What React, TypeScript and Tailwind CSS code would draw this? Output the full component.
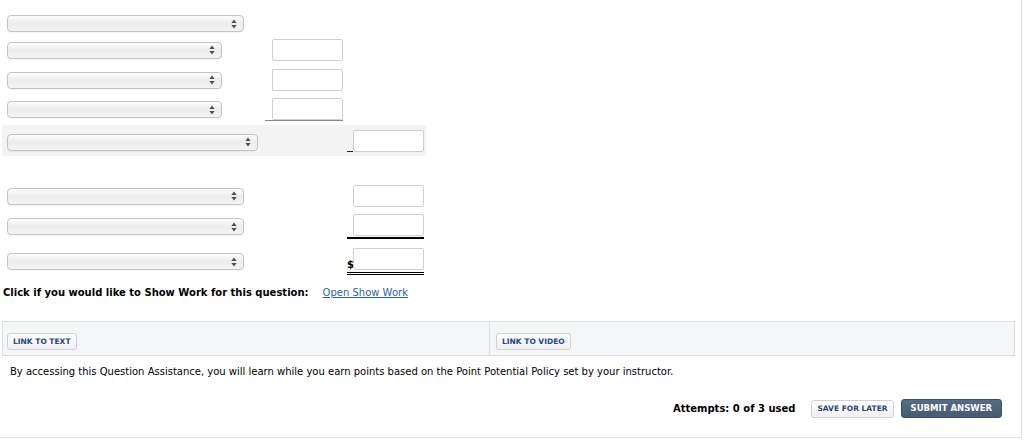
import React from "react";

function Select({ w }: { w: string }) {
  return (
    <div
      className={`${w} h-[17px] shrink-0 flex items-center justify-end pr-[6px] rounded-[4px] border border-[#c3c3c3] bg-gradient-to-b from-[#fdfdfd] via-[#ececec] to-[#f4f4f4] shadow-[0_1px_0_rgba(0,0,0,0.04)]`}
    >
      <svg width="6" height="10" viewBox="0 0 6 10" className="text-[#505050]">
        <path d="M3 0.5 L5.6 4 L0.4 4 Z" fill="currentColor" />
        <path d="M3 9.5 L5.6 6 L0.4 6 Z" fill="currentColor" />
      </svg>
    </div>
  );
}

function Field() {
  return <div className="w-[71px] h-[22px] shrink-0 rounded-[2px] border border-[#cfcfcf] bg-white" />;
}

function SmallButton({ children }: { children: React.ReactNode }) {
  return (
    <div className="h-[17px] px-[5px] flex items-center rounded-[3px] border border-[#cdd2da] bg-gradient-to-b from-white to-[#edf0f4] text-[7.5px] font-bold text-[#2c4677]">
      {children}
    </div>
  );
}

export default function App() {
  return (
    <div
      className="w-[1022px] h-[438px] border-r border-b border-[#dfe2e8] bg-white text-black"
      style={{ fontFamily: '"DejaVu Sans", Verdana, sans-serif' }}
    >
      {/* answer rows */}
      <div className="pt-[15px] pl-[7px]">
        <Select w="w-[237px]" />
      </div>

      <div className="mt-[7px] pl-[7px] flex items-center gap-[50px]">
        <Select w="w-[215px]" />
        <Field />
      </div>

      <div className="mt-[8px] pl-[7px] flex items-center gap-[50px]">
        <Select w="w-[215px]" />
        <Field />
      </div>

      <div className="mt-[7px] pl-[7px] flex items-center gap-[43px]">
        <Select w="w-[215px]" />
        <div className="pl-[7px] border-b border-[#8a8a8a]">
          <Field />
        </div>
      </div>

      <div className="mt-[4px] ml-[2px] w-[424px] h-[31px] bg-[#f3f3f3] flex items-center pl-[5px] gap-[89px]">
        <div className="pt-[3px]">
          <Select w="w-[251px]" />
        </div>
        <div className="flex items-end">
          <span className="w-[6px] border-b border-[#222]" />
          <Field />
        </div>
      </div>

      <div className="mt-[29px] pl-[7px] flex items-center gap-[103px]">
        <Select w="w-[237px]" />
        <div className="pl-[6px]">
          <Field />
        </div>
      </div>

      <div className="mt-[7px] pl-[7px] flex items-center gap-[103px]">
        <Select w="w-[237px]" />
        <div className="pl-[6px] pb-[1px] border-b-2 border-black">
          <Field />
        </div>
      </div>

      <div className="mt-[9px] pl-[7px] flex items-center gap-[103px]">
        <Select w="w-[237px]" />
        <div className="flex items-end pb-[2px] border-b-[3px] border-double border-black">
          <span className="w-[6px] text-[10px] font-bold leading-[11px]">$</span>
          <Field />
        </div>
      </div>

      {/* show work */}
      <div className="mt-[10px] pl-[3px] flex items-center text-[10px] leading-[16px]">
        <span className="font-bold">Click if you would like to Show Work for this question:</span>
        <span className="ml-[14px] text-[#2d62b0] underline">Open Show Work</span>
      </div>

      {/* question assistance */}
      <div className="mt-[20px] ml-[2px] w-[1013px] h-[35px] flex border border-[#d9dde4] bg-[#f5f6f8]">
        <div className="w-[487px] pl-[4px] pt-[5px] border-r border-[#d9dde4]">
          <div className="inline-flex">
            <SmallButton>LINK TO TEXT</SmallButton>
          </div>
        </div>
        <div className="flex-1 pl-[6px] pt-[5px]">
          <div className="inline-flex">
            <SmallButton>LINK TO VIDEO</SmallButton>
          </div>
        </div>
      </div>

      <p className="mt-[8px] pl-[10px] text-[10px] leading-[16px]">
        By accessing this Question Assistance, you will learn while you earn points based on the Point Potential Policy set by your instructor.
      </p>

      {/* footer */}
      <div className="mt-[19px] pr-[19px] flex items-center justify-end">
        <span className="text-[10px] font-bold leading-[16px]">Attempts: 0 of 3 used</span>
        <div className="ml-[16px] h-[18px] px-[5px] flex items-center rounded-[3px] border border-[#cdd2da] bg-gradient-to-b from-white to-[#edf0f4] text-[7.5px] font-bold text-[#2c4677]">
          SAVE FOR LATER
        </div>
        <div className="ml-[7px] h-[19px] px-[9px] flex items-center rounded-[3px] border border-[#3c4e64] bg-gradient-to-b from-[#566b85] to-[#465a73] text-[8.5px] font-bold text-white">
          SUBMIT ANSWER
        </div>
      </div>
    </div>
  );
}
